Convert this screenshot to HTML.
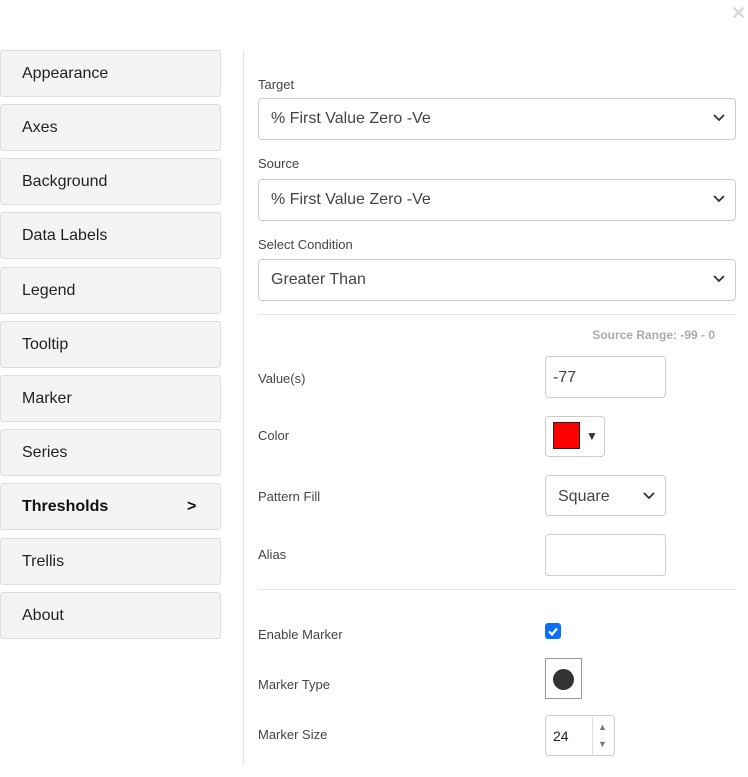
<!DOCTYPE html>
<html><head><style>
body{margin:0;width:748px;height:777px;background:#fff;font-family:"Liberation Sans",sans-serif;position:relative;overflow:hidden}
.a{position:absolute}
.nav{position:absolute;left:0;background:#f4f4f4;border:1px solid #ddd;border-radius:3px;font-size:16px;color:#222;line-height:45px;padding-left:21px;box-sizing:border-box;width:221px;height:47px}
.lbl{position:absolute;left:258px;font-size:13px;color:#444}
.sel{position:absolute;left:258px;width:478px;height:42px;border:1px solid #ccc;border-radius:4px;box-sizing:border-box;font-size:16px;color:#444;line-height:40px;padding-left:12px}
.chev{position:absolute;right:10px;top:15px}
.box{position:absolute;border:1px solid #ccc;border-radius:4px;box-sizing:border-box}
</style></head><body>
<div class="a" style="left:731px;top:3px;font-size:18px;color:#d8d8d8;font-weight:bold">✕</div>
<div class="nav" style="top:50px">Appearance</div>
<div class="nav" style="top:104px">Axes</div>
<div class="nav" style="top:158px">Background</div>
<div class="nav" style="top:212px">Data Labels</div>
<div class="nav" style="top:267px">Legend</div>
<div class="nav" style="top:321px">Tooltip</div>
<div class="nav" style="top:375px">Marker</div>
<div class="nav" style="top:429px">Series</div>
<div class="nav" style="top:483px;font-weight:bold;color:#111">Thresholds<span style="position:absolute;left:186px">&gt;</span></div>
<div class="nav" style="top:538px">Trellis</div>
<div class="nav" style="top:592px">About</div>
<div class="a" style="left:243px;top:50px;width:1px;height:715px;background:#e5e5e5"></div>

<div class="lbl" style="top:77px">Target</div>
<div class="sel" style="top:98px">% First Value Zero -Ve<svg class="chev" width="12" height="8" viewBox="0 0 12 8"><path d="M1 1l5 5 5-5" fill="none" stroke="#333" stroke-width="1.8"/></svg></div>
<div class="lbl" style="top:156px">Source</div>
<div class="sel" style="top:179px">% First Value Zero -Ve<svg class="chev" width="12" height="8" viewBox="0 0 12 8"><path d="M1 1l5 5 5-5" fill="none" stroke="#333" stroke-width="1.8"/></svg></div>
<div class="lbl" style="top:237px">Select Condition</div>
<div class="sel" style="top:259px">Greater Than<svg class="chev" width="12" height="8" viewBox="0 0 12 8"><path d="M1 1l5 5 5-5" fill="none" stroke="#333" stroke-width="1.8"/></svg></div>
<div class="a" style="left:258px;top:314px;width:478px;height:1px;background:#e5e5e5"></div>
<div class="a" style="left:588px;top:328px;font-size:12px;color:#aaa;font-weight:bold;width:127px;text-align:right">Source Range: -99 - 0</div>

<div class="lbl" style="top:371px">Value(s)</div>
<div class="box" style="left:545px;top:356px;width:121px;height:42px;font-size:16px;color:#444;line-height:42px;padding-left:7px">-77</div>
<div class="lbl" style="top:428px">Color</div>
<div class="box" style="left:545px;top:416px;width:60px;height:41px"><div class="a" style="left:7px;top:5px;width:25px;height:25px;background:#f00;border:1px solid #222"></div><div class="a" style="left:40px;top:12px;font-size:12px;color:#333">▼</div></div>
<div class="lbl" style="top:489px">Pattern Fill</div>
<div class="box" style="left:545px;top:475px;width:121px;height:41px;font-size:16px;color:#444;line-height:41px;padding-left:12px">Square<svg class="chev" style="top:16px" width="12" height="8" viewBox="0 0 12 8"><path d="M1 1l5 5 5-5" fill="none" stroke="#333" stroke-width="1.8"/></svg></div>
<div class="lbl" style="top:547px">Alias</div>
<div class="box" style="left:545px;top:534px;width:121px;height:42px"></div>
<div class="a" style="left:258px;top:589px;width:478px;height:1px;background:#e5e5e5"></div>

<div class="lbl" style="top:627px">Enable Marker</div>
<div class="a" style="left:545px;top:623px;width:16px;height:16px;background:#0d6efd;border-radius:3px"><svg width="16" height="16" viewBox="0 0 16 16"><path d="M4 8.5l3 3 5-6" fill="none" stroke="#fff" stroke-width="2.2"/></svg></div>
<div class="lbl" style="top:677px">Marker Type</div>
<div class="a" style="left:545px;top:658px;width:35px;height:39px;border:1px solid #999"><div class="a" style="left:7px;top:10px;width:21px;height:21px;border-radius:50%;background:#333"></div></div>
<div class="lbl" style="top:727px">Marker Size</div>
<div class="box" style="left:545px;top:715px;width:70px;height:41px;font-size:14px;color:#222;line-height:41px;padding-left:7px">24<div class="a" style="left:46px;top:0;width:1px;height:39px;background:#ddd"></div><div class="a" style="left:52px;top:-9px;font-size:9px;color:#777">▲</div><div class="a" style="left:52px;top:8px;font-size:9px;color:#777">▼</div></div>
</body></html>
